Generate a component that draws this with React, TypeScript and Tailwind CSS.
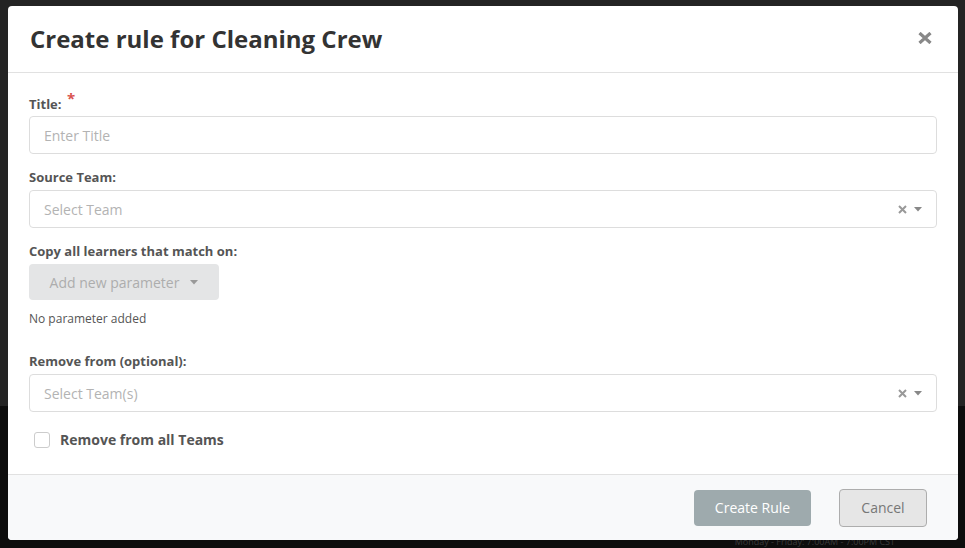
import React from "react";

const font = { fontFamily: '"Open Sans", "Liberation Sans", sans-serif' };

const ClearAndCaret = () => (
  <div className="flex items-center gap-[7px] pr-[14px]">
    <svg width="9" height="9" viewBox="0 0 9 9">
      <path d="M1 1L8 8M8 1L1 8" stroke="#999" strokeWidth="2" />
    </svg>
    <svg width="8" height="5" viewBox="0 0 8 5">
      <path d="M0 0H8L4 4.5Z" fill="#888" />
    </svg>
  </div>
);

const FieldLabel = ({ children }: { children: React.ReactNode }) => (
  <label className="block text-[13px] font-bold leading-[18px] text-[#555] mb-[4px]">
    {children}
  </label>
);

const SelectBox = ({ placeholder }: { placeholder: string }) => (
  <div className="flex h-[38px] items-center justify-between rounded-[4px] border border-[#ddd] bg-white">
    <span className="pl-[14px] text-[14px] text-[#b3b3b3]">{placeholder}</span>
    <ClearAndCaret />
  </div>
);

export default function App() {
  return (
    <div className="relative h-[548px] w-[965px] overflow-hidden" style={font}>
      {/* dimmed page behind the modal */}
      <div className="flex h-full flex-col">
        <div className="h-[406px] bg-[#242424]" />
        <div className="flex flex-1 items-end justify-end bg-[#0d0d0d] pb-[1px] pr-[70px]">
          <span className="text-[9px] leading-[10px] text-[#3a3a3a]">
            Monday - Friday: 7:00AM - 7:00PM CST
          </span>
        </div>
      </div>

      {/* modal */}
      <div className="absolute left-[8px] top-[6px] flex h-[534px] w-[950px] flex-col overflow-hidden rounded-[4px] bg-white">
        <div className="flex h-[67px] items-center justify-between border-b border-[#e1e1e1] pl-[22px] pr-[26px]">
          <h2 className="text-[24px] font-bold leading-[32px] text-[#333] pb-[1px]">
            Create rule for Cleaning Crew
          </h2>
          <svg width="14" height="12" viewBox="0 0 14 12" className="mb-[2px]">
            <path d="M1.5 1L12.5 11M12.5 1L1.5 11" stroke="#888" strokeWidth="3.2" />
          </svg>
        </div>

        <div className="flex-1 px-[21px] pt-[21px]">
          <label className="block text-[13px] font-bold leading-[18px] text-[#555] mb-[3px]">
            Title: <span className="relative top-[-5px] ml-[2px] text-[15px] text-[#d9534f]">*</span>
          </label>
          <div className="flex h-[38px] items-center rounded-[4px] border border-[#ddd]">
            <span className="pl-[14px] text-[14px] text-[#b3b3b3]">Enter Title</span>
          </div>

          <div className="mt-[14px]">
            <FieldLabel>Source Team:</FieldLabel>
            <SelectBox placeholder="Select Team" />
          </div>

          <div className="mt-[14px]">
            <FieldLabel>Copy all learners that match on:</FieldLabel>
            <div className="flex h-[36px] w-[190px] items-center justify-center gap-[11px] rounded-[4px] bg-[#e4e5e6]">
              <span className="text-[14px] text-[#adadad]">Add new parameter</span>
              <svg width="8" height="5" viewBox="0 0 8 5">
                <path d="M0 0H8L4 4.5Z" fill="#999" />
              </svg>
            </div>
            <p className="mt-[11px] text-[12px] leading-[16px] text-[#555]">No parameter added</p>
          </div>

          <div className="mt-[25px]">
            <FieldLabel>Remove from (optional):</FieldLabel>
            <SelectBox placeholder="Select Team(s)" />
          </div>

          <div className="mt-[18px] flex items-center gap-[10px] pl-[5px]">
            <div className="h-[16px] w-[16px] rounded-[3px] border border-[#ccc] bg-white" />
            <span className="text-[14px] font-bold leading-[20px] text-[#555]">Remove from all Teams</span>
          </div>
        </div>

        <div className="flex h-[66px] items-center justify-end gap-[28px] border-t border-[#e1e1e1] bg-[#f8f9fa] pr-[31px]">
          <button className="h-[36px] w-[117px] rounded-[4px] bg-[#9eaaad] text-[14px] text-white">
            Create Rule
          </button>
          <button className="h-[38px] w-[88px] rounded-[4px] border border-[#adadad] bg-[#e6e6e6] text-[14px] text-[#777]">
            Cancel
          </button>
        </div>
      </div>
    </div>
  );
}
